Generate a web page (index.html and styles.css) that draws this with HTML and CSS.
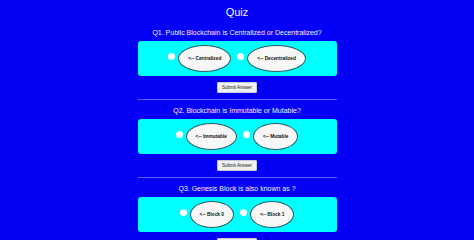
FILE: index.html
```html
<!DOCTYPE html>
<html lang="en">
<head>
  <meta charset="UTF-8" />
  <meta name="viewport" content="width=device-width, initial-scale=1.0"/>
  <title>Quiz</title>
  <link rel="stylesheet" href="styles.css">
</head>
<body>
  <div class="quiz">
    <h1 class="quiz-title">Quiz</h1>

    <div class="question">
      <h2>Q1. Public Blockchain is Centralized or Decentralized?</h2>
      <div class="options">
        <label class="option"><input type="radio" name="q1" /><span>&lt;-- Centralized</span></label>
        <label class="option"><input type="radio" name="q1" /><span>&lt;-- Decentralized</span></label>
      </div>
      <button class="submit-btn">Submit Answer</button>
      <hr />
    </div>

    <div class="question">
      <h2>Q2. Blockchain is Immutable or Mutable?</h2>
      <div class="options">
        <label class="option"><input type="radio" name="q2" /><span>&lt;-- Immutable</span></label>
        <label class="option"><input type="radio" name="q2" /><span>&lt;-- Mutable</span></label>
      </div>
      <button class="submit-btn">Submit Answer</button>
      <hr />
    </div>

    <div class="question">
      <h2>Q3. Genesis Block is also known as ?</h2>
      <div class="options">
        <label class="option"><input type="radio" name="q3" /><span>&lt;-- Block 0</span></label>
        <label class="option"><input type="radio" name="q3" /><span>&lt;-- Block 1</span></label>
      </div>
      <button class="submit-btn">Submit Answer</button>
      <hr />
    </div>
  </div>
</body>
</html>
```

FILE: styles.css
```css
body {
  margin: 0;
  background: #0400f6;
  color: #f2f2ff;
  font-family: "Liberation Sans", Arial, sans-serif;
}

.quiz {
  width: 199px;
  margin: 0 auto;
  text-align: center;
}

.quiz-title {
  margin: 5px 0 0;
  font-size: 11px;
  line-height: 14px;
  font-weight: normal;
}

.question h2 {
  margin: 6px 0 3px;
  font-size: 7px;
  line-height: 10px;
  font-weight: normal;
}

.quiz-title + .question h2 {
  margin-top: 9px;
}

/* answer card */
.options {
  display: flex;
  justify-content: center;
  align-items: center;
  gap: 6px;
  padding: 4px 0;
  background: #00ffff;
  border-radius: 3px;
}

.option {
  display: flex;
  align-items: center;
}

.option input {
  appearance: none;
  width: 7px;
  height: 7px;
  margin: 0 3px 5px 0;
  border-radius: 50%;
  background: #fff;
}

.option span {
  padding: 10px 9px;
  border: 1px solid #2b5f64;
  border-radius: 50%;
  background: #f7f7f7;
  color: #111;
  font-size: 4.8px;
  line-height: 5px;
  font-weight: bold;
}

.submit-btn {
  display: block;
  margin: 6px auto 0;
  padding: 0 4px;
  height: 11px;
  font-family: inherit;
  font-size: 4.5px;
  color: #222;
  background: #f0f0f0;
  border: 1px solid #c8c8d8;
  border-radius: 1px;
}

hr {
  margin: 6px 0 0;
  border: 0;
  height: 1px;
  background: #5d5dfb;
}
```
